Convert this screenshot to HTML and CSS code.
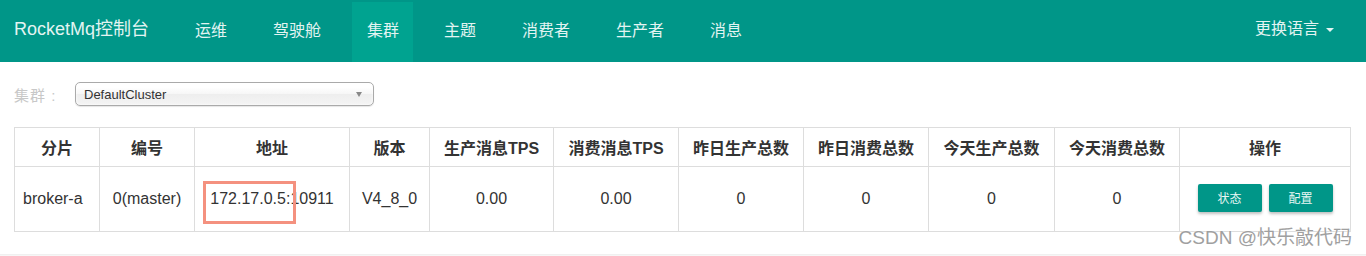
FILE: index.html
```html
<!DOCTYPE html>
<html lang="zh-CN">
<head>
<meta charset="utf-8">
<title>RocketMq控制台</title>
<link rel="stylesheet" href="styles.css">
</head>
<body>
<header class="navbar">
  <div class="brand">RocketMq控制台</div>
  <nav class="nav">
    <a class="nav-item">运维</a>
    <a class="nav-item">驾驶舱</a>
    <a class="nav-item active">集群</a>
    <a class="nav-item">主题</a>
    <a class="nav-item">消费者</a>
    <a class="nav-item">生产者</a>
    <a class="nav-item">消息</a>
  </nav>
  <div class="lang">更换语言<span class="caret"></span></div>
</header>
<main class="content">
  <div class="filter">
    <span class="filter-label">集群 :</span>
    <div class="select">
      <span>DefaultCluster</span>
      <span class="select-arrow"></span>
    </div>
  </div>
  <table class="grid">
    <colgroup>
      <col class="c85"><col class="c95"><col class="c155"><col class="c80">
      <col class="c124"><col class="c125"><col class="c125"><col class="c125">
      <col class="c126"><col class="c125"><col class="c170">
    </colgroup>
    <thead>
      <tr>
        <th>分片</th><th>编号</th><th>地址</th><th>版本</th>
        <th>生产消息TPS</th><th>消费消息TPS</th><th>昨日生产总数</th><th>昨日消费总数</th>
        <th>今天生产总数</th><th>今天消费总数</th><th>操作</th>
      </tr>
    </thead>
    <tbody>
      <tr>
        <td>broker-a</td>
        <td>0(master)</td>
        <td><span class="addr">172.17.0.5:10911</span></td>
        <td>V4_8_0</td>
        <td>0.00</td>
        <td>0.00</td>
        <td>0</td>
        <td>0</td>
        <td>0</td>
        <td>0</td>
        <td>
          <div class="actions">
            <button class="btn">状态</button>
            <button class="btn">配置</button>
          </div>
        </td>
      </tr>
    </tbody>
  </table>
  <div class="watermark">CSDN @快乐敲代码</div>
</main>
<div class="foot"></div>
</body>
</html>
```
FILE: styles.css
```css
* { box-sizing: border-box; }
html, body {
  margin: 0;
  padding: 0;
  background: #fff;
  font-family: "Liberation Sans", "Noto Sans CJK SC", sans-serif;
  color: #333;
}
.navbar {
  height: 62px;
  background: #009688;
  display: flex;
  align-items: flex-start;
  color: #e3f4f2;
}
.brand {
  font-size: 18px;
  line-height: 58px;
  padding-left: 14px;
  width: 180px;
  flex: none;
}
.nav {
  display: flex;
  gap: 16px;
  margin-top: 2px;
}
.nav-item {
  font-size: 16px;
  height: 60px;
  line-height: 58px;
  padding: 0 15px 0 15px;
  color: #e3f4f2;
}
.nav-item.active {
  background: #00a390;
  padding-right: 14px;
}
.lang {
  margin-left: auto;
  font-size: 16px;
  line-height: 58px;
  padding-right: 32px;
  display: flex;
  align-items: center;
}
.caret {
  width: 0;
  height: 0;
  border-left: 4px solid transparent;
  border-right: 4px solid transparent;
  border-top: 4px solid #e3f4f2;
  margin-left: 7px;
  margin-top: 2px;
}
.content {
  position: relative;
  padding: 20px 17px 0 14px;
  height: 192px;
}
.filter {
  display: flex;
  align-items: center;
  height: 24px;
}
.filter-label {
  font-size: 15px;
  color: #c8c8c8;
  width: 61px;
  letter-spacing: 1px;
}
.select {
  width: 299px;
  height: 24px;
  border: 1px solid #aaa;
  border-radius: 5px;
  background: linear-gradient(#fff 20%, #f6f6f6 50%, #eee 52%, #f4f4f4 100%);
  box-shadow: 0 0 3px #fff inset, 0 1px 1px rgba(0,0,0,0.1);
  display: flex;
  align-items: center;
  justify-content: space-between;
  padding: 0 11px 0 8px;
  font-size: 13px;
  color: #333;
}
.select-arrow {
  width: 0;
  height: 0;
  border-left: 3px solid transparent;
  border-right: 3px solid transparent;
  border-top: 5px solid #888;
}
.grid {
  margin-top: 21px;
  border-collapse: collapse;
  table-layout: fixed;
  width: 1336px;
  font-size: 16px;
}
.c85 { width: 85px; }
.c95 { width: 95px; }
.c155 { width: 155px; }
.c80 { width: 80px; }
.c124 { width: 124px; }
.c125 { width: 125px; }
.c126 { width: 126px; }
.c170 { width: 171px; }
.grid th, .grid td {
  border: 1px solid #ddd;
  text-align: center;
  padding: 0;
  white-space: nowrap;
}
.grid th {
  height: 39px;
  font-weight: bold;
  color: #333;
}
.grid td {
  height: 65px;
  color: #333;
}
.grid td:first-child {
  text-align: left;
  padding-left: 8px;
}
.addr {
  position: relative;
}
.addr::after {
  content: "";
  position: absolute;
  left: -7px;
  top: -9px;
  width: 87px;
  height: 37px;
  border: 3px solid #f4917f;
}
.actions {
  display: flex;
  justify-content: center;
  gap: 7px;
  margin-top: -3px;
}
.btn {
  width: 64px;
  height: 28px;
  border: none;
  border-radius: 2px;
  background: #009688;
  color: #e8f6f4;
  font-family: "Liberation Sans", "Noto Sans CJK SC", sans-serif;
  font-size: 12px;
  box-shadow: 0 2px 3px rgba(0,0,0,0.25);
  padding: 0;
}
.watermark {
  position: absolute;
  right: 14px;
  top: 160px;
  font-size: 19px;
  color: #a0a0a0;
  text-shadow: 0 0 2px #fff;
}
.foot {
  height: 2px;
  background: #f6f6f6;
  border-top: 1px solid #f0f0f0;
}
```
